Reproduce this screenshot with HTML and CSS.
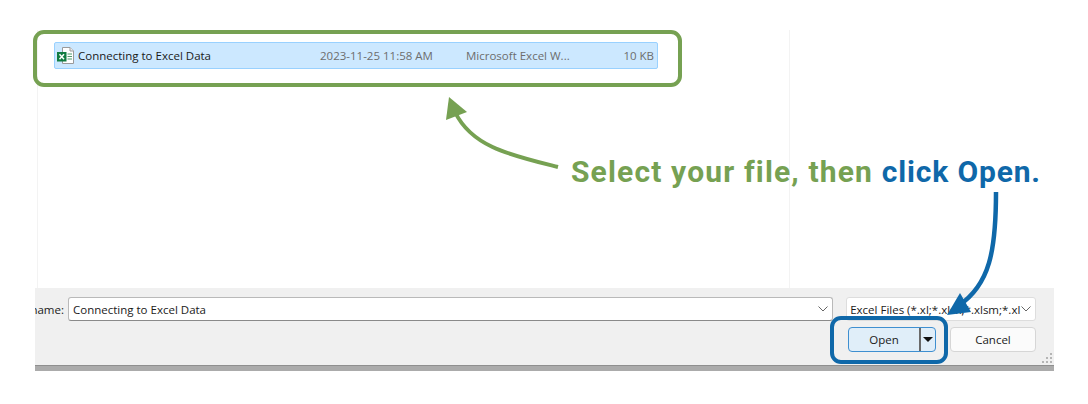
FILE: index.html
```html
<!DOCTYPE html>
<html lang="en">
<head>
<meta charset="utf-8">
<title>Select your file</title>
<link rel="stylesheet" href="styles.css">
</head>
<body>
<div class="stage">
  <main class="window">
    <section class="listing">
      <div class="file-row">
        <svg class="xl-icon" width="18" height="18" viewBox="0 0 18 18" aria-hidden="true">
          <path d="M5.500 .5H13L16.500 4V16.500H5.500Z" fill="#fff" stroke="#9a9a9a"/>
          <path d="M13 .5V4H16.500" fill="#eee" stroke="#9a9a9a"/>
          <path d="M10.500 7H15M10.500 9.500H15M10.500 12H15" stroke="#4f9c6e" stroke-width="1.200"/>
          <rect x="0" y="5" width="9.500" height="9.500" fill="#107c41"/>
          <path d="M2.500 7.300L7 12.200M7 7.300L2.500 12.200" stroke="#fff" stroke-width="1.500"/>
        </svg>
        <span class="col-name">Connecting to Excel Data</span>
        <span class="col-date">2023-11-25 11:58 AM</span>
        <span class="col-type">Microsoft Excel W...</span>
        <span class="col-size">10 KB</span>
      </div>
    </section>
    <footer class="panel">
      <div class="panel-row">
        <div class="name-label"><span>File name:</span></div>
        <div class="name-input">
          <span>Connecting to Excel Data</span>
          <svg class="chev" width="10" height="6" viewBox="0 0 10 6"><path d="M.5 .5L5 5L9.500 .5" fill="none" stroke="#666"/></svg>
        </div>
        <div class="type-select">
          <span>Excel Files (*.xl;*.xlsx;*.xlsm;*.xl</span>
          <svg class="chev" width="10" height="6" viewBox="0 0 10 6"><path d="M.5 .5L5 5L9.500 .5" fill="none" stroke="#666"/></svg>
        </div>
      </div>
      <div class="panel-row actions">
        <div class="btn btn-open">
          <span class="btn-label">Open</span>
          <span class="btn-split"></span>
          <span class="btn-caret"></span>
        </div>
        <div class="btn btn-cancel">Cancel</div>
      </div>
      <svg class="grip" width="12" height="12" viewBox="0 0 12 12" aria-hidden="true">
        <path d="M9 1h2v2H9zM5 5h2v2H5zM9 5h2v2H9zM1 9h2v2H1zM5 9h2v2H5zM9 9h2v2H9z" fill="#b5b5b5"/>
      </svg>
    </footer>
    <div class="bottom-edge"></div>
  </main>

  <div class="callout callout-file"></div>
  <div class="callout callout-open"></div>

  <p class="caption"><span class="green">Select your file, then </span><span class="blue">click Open.</span></p>

  <svg class="arrows" width="1088" height="404" viewBox="0 0 1088 404" aria-hidden="true">
    <path d="M558 167C510 155 472 147 455 112" fill="none" stroke="#76a152" stroke-width="4"/>
    <path d="M449 97L446 120L467 112Z" fill="#76a152"/>
    <path d="M996 192C996 250 990 285 958 306" fill="none" stroke="#0f68a9" stroke-width="4.500"/>
    <path d="M947 315L960 293L971 312Z" fill="#0f68a9"/>
  </svg>
</div>
</body>
</html>
```
FILE: styles.css
```css
* { box-sizing: border-box; }
html, body { margin: 0; padding: 0; background: #fff; }
.stage {
  position: relative;
  width: 1088px;
  height: 404px;
  overflow: hidden;
  padding: 30px 34px 0 35px;
  font-family: "Open Sans", "Noto Sans", sans-serif;
  font-size: 11.500px;
  color: #1a1a1a;
}
.window { display: flex; flex-direction: column; height: 341px; }
.listing {
  height: 258px;
  margin: 0 264px 0 2px;
  padding: 12px 0 0 16px;
  border-left: 1px solid #f3f3f3;
  border-right: 1px solid #f3f3f3;
}
.file-row {
  display: flex;
  align-items: center;
  width: 604px;
  height: 27px;
  padding-left: 2px;
  background: #cce8ff;
  border: 1px solid #99d1ff;
  border-radius: 2px;
}
.xl-icon { flex: none; width: 18px; height: 18px; margin-right: 3px; }
.col-name { width: 242px; }
.col-date { width: 146px; color: #6d6d6d; }
.col-type { width: 148px; color: #6d6d6d; }
.col-size { width: 40px; text-align: right; color: #6d6d6d; }
.panel {
  position: relative;
  flex: 1;
  display: flex;
  flex-direction: column;
  gap: 6px;
  padding: 9px 18px 0 0;
  background: #f0f0f0;
}
.panel-row { display: flex; align-items: center; }
.name-label {
  display: flex;
  justify-content: flex-end;
  flex: none;
  width: 29px;
  margin-right: 4px;
  overflow: hidden;
  white-space: nowrap;
}
.name-label span { flex: none; }
.name-input, .type-select {
  display: flex;
  align-items: center;
  justify-content: space-between;
  height: 24px;
  background: #fff;
  border: 1px solid #b9b9b9;
  border-radius: 3px;
  white-space: nowrap;
  overflow: hidden;
}
.name-input { width: 766px; padding: 0 4px 0 4px; border-bottom-color: #8a8a8a; }
.type-select { width: 190px; margin-left: 13px; padding: 0 4px 0 3px; border-color: #ddd; }
.type-select span { flex: none; width: 170px; }
.chev { flex: none; }
.actions { justify-content: flex-end; gap: 14px; padding-right: 0; }
.btn {
  display: flex;
  align-items: center;
  justify-content: center;
  width: 86px;
  height: 25px;
  background: #fbfbfb;
  border: 1px solid #d6d6d6;
  border-radius: 4px;
}
.btn-open {
  width: 88px;
  background: #e0eef9;
  border: 1px solid #3f8fd0;
}
.btn-label { flex: 1; text-align: center; }
.btn-split { width: 2px; height: 23px; background: #6a6a6a; }
.btn-caret {
  flex: none;
  width: 0; height: 0;
  margin: 0 2px 0 2px;
  border: 5px solid transparent;
  border-top: 5px solid #111;
  border-bottom: 0;
}
.grip { position: absolute; right: 1px; bottom: 1px; }
.bottom-edge { height: 6px; background: #ababab; border-top: 1px solid #8f8f8f; }
.callout { position: absolute; border-style: solid; }
.callout-file {
  left: 33px; top: 30px; width: 649px; height: 57px;
  border: 4px solid #76a152; border-radius: 11px;
}
.callout-open {
  left: 830px; top: 316px; width: 118px; height: 48px;
  border: 4px solid #0f68a9; border-radius: 11px;
}
.caption {
  position: absolute;
  left: 571px; top: 153px;
  margin: 0;
  font-family: Roboto, "Liberation Sans", sans-serif;
  font-weight: 700;
  font-size: 30px;
  line-height: 38px;
  white-space: nowrap;
}
.green { color: #76a152; letter-spacing: 1.150px; }
.blue { color: #0f68a9; letter-spacing: 0.850px; }
.arrows { position: absolute; left: 0; top: 0; pointer-events: none; }
```
